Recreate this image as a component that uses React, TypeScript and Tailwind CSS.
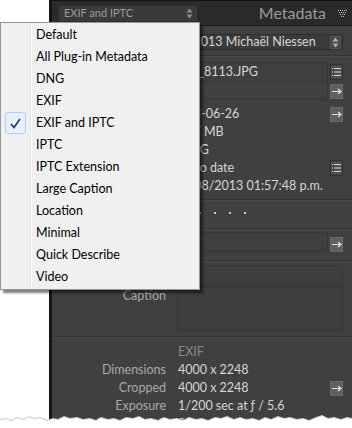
import React from 'react'

const presets = [
  'Default',
  'All Plug-in Metadata',
  'DNG',
  'EXIF',
  'EXIF and IPTC',
  'IPTC',
  'IPTC Extension',
  'Large Caption',
  'Location',
  'Minimal',
  'Quick Describe',
  'Video',
]

function Stepper({ color = '#a0a0a0' }: { color?: string }) {
  return (
    <svg width="7" height="11" viewBox="0 0 7 11">
      <path d="M3.5 0.5 L6.5 4.5 H0.5 Z M3.5 10.5 L6.5 6.5 H0.5 Z" fill={color} />
    </svg>
  )
}

function ListIcon() {
  return (
    <div className="w-[13px] h-[16px] bg-[#4c4c4c] border border-[#2e2e2e] flex items-center justify-center">
      <svg width="9" height="10" viewBox="0 0 9 10">
        <g fill="#d8d8d8">
          <rect x="0" y="1" width="1" height="1" />
          <rect x="2" y="1" width="7" height="1" />
          <rect x="0" y="4.5" width="1" height="1" />
          <rect x="2" y="4.5" width="7" height="1" />
          <rect x="0" y="8" width="1" height="1" />
          <rect x="2" y="8" width="7" height="1" />
        </g>
      </svg>
    </div>
  )
}

function ArrowIcon() {
  return (
    <div className="w-[13px] h-[15px] bg-[#5e5e5e] border border-[#6a6a6a] flex items-center justify-center">
      <svg width="10" height="7" viewBox="0 0 10 7">
        <path d="M0 3.5 H8.5 M6 1 L9 3.5 L6 6" stroke="#e4e4e4" strokeWidth="1.2" fill="none" />
      </svg>
    </div>
  )
}

function Sep({ className = '' }: { className?: string }) {
  return <div className={`h-[2px] bg-[#333333] border-b border-[#4a4a4a] ${className}`} />
}

type RowProps = {
  label?: string
  value?: React.ReactNode
  icon?: React.ReactNode
  gap?: string
}

// gap = left margin of the value column (default puts values at x=178)
function Row({ label, value, icon, gap = 'ml-[12px]' }: RowProps) {
  return (
    <div className="flex items-center h-[18px]">
      <div className="w-[114px] shrink-0 text-right text-[#a8a8a8]">{label}</div>
      <div className={`${gap} flex-1 min-w-0 whitespace-nowrap overflow-hidden text-[#d6d6d6]`}>{value}</div>
      <div className="w-[13px] ml-[2px] mr-[9px] shrink-0 flex justify-center">{icon}</div>
    </div>
  )
}

function BoxRow({ value, icon, gap = 'ml-[9px]' }: RowProps) {
  return (
    <div className="flex items-center h-[20px]">
      <div className="w-[114px] shrink-0" />
      <div className={`${gap} flex-1 h-full border border-[#373737] bg-[#3f3f3f] flex items-center whitespace-nowrap overflow-hidden text-[#d6d6d6]`}>
        {value}
      </div>
      <div className="w-[13px] ml-[2px] mr-[9px] shrink-0 flex justify-center">{icon}</div>
    </div>
  )
}

// ragged paper edge at the bottom of the screenshot
function TornEdge() {
  return (
    <svg className="absolute left-0 bottom-0" width="352" height="13" viewBox="0 0 352 13">
      <path
        d="M0 13 L0 4 L6 3 L11 5 L17 2 L23 4 L29 1 L34 3 L40 2 L47 5 L53 3 L58 4 L64 1 L70 3 L77 2 L83 4 L90 3 L96 5 L101 2 L108 4 L114 3 L120 5 L126 2 L133 3 L139 1 L145 4 L151 3 L158 5 L164 2 L170 4 L177 3 L183 5 L189 2 L196 4 L202 3 L208 5 L215 2 L221 3 L227 1 L234 4 L240 2 L246 4 L253 3 L259 5 L265 2 L271 4 L278 1 L284 3 L290 2 L297 4 L303 3 L309 5 L316 2 L322 0 L328 3 L334 2 L341 4 L347 2 L352 3 L352 13 Z"
        fill="#c8c8c8"
      />
      <path
        d="M0 13 L0 5 L6 4 L11 6 L17 3 L23 5 L29 2 L34 4 L40 3 L47 6 L53 4 L58 5 L64 2 L70 4 L77 3 L83 5 L90 4 L96 6 L101 3 L108 5 L114 4 L120 6 L126 3 L133 4 L139 2 L145 5 L151 4 L158 6 L164 3 L170 5 L177 4 L183 6 L189 3 L196 5 L202 4 L208 6 L215 3 L221 4 L227 2 L234 5 L240 3 L246 5 L253 4 L259 6 L265 3 L271 5 L278 2 L284 4 L290 3 L297 5 L303 4 L309 6 L316 3 L322 1 L328 4 L334 3 L341 5 L347 3 L352 4 L352 13 Z"
        fill="#ffffff"
      />
    </svg>
  )
}

function PresetMenu() {
  return (
    <div className="absolute left-0 top-[22px] w-[200px] bg-[#f0f0f0] border border-[#979797] py-px shadow-[3px_3px_2px_rgba(0,0,0,0.5)] font-['Lato',sans-serif] text-[12.5px] text-black">
      <div className="absolute left-[29px] top-0 bottom-0 w-px bg-[#e2e3e3]" />
      <div className="absolute left-[30px] top-0 bottom-0 w-px bg-white" />
      {presets.map((p) => (
        <div key={p} className="relative h-[22px] flex items-center pl-[35px]">
          {p === 'EXIF and IPTC' && (
            <div className="absolute left-[4px] top-0 w-[21px] h-[22px] rounded-[3px] border border-[#aecff7] bg-[#e8f1fb] flex items-center justify-center">
              <svg width="11" height="11" viewBox="0 0 11 11">
                <path d="M1 6 L4 9.5 L10 1" stroke="#14326b" strokeWidth="1.6" fill="none" />
              </svg>
            </div>
          )}
          {p}
        </div>
      ))}
    </div>
  )
}

export default function App() {
  return (
    <div className="relative w-[352px] h-[428px] bg-white overflow-hidden font-['Lato',sans-serif] text-[12.5px]">
      <div className="ml-[49px] h-[428px] border-l-[3px] border-[#141414] bg-[#404040] flex flex-col">
        {/* header */}
        <div className="h-[26px] shrink-0 bg-[#2a2a2a] border-t border-[#111111] border-b border-b-[#1c1c1c] flex items-center">
          <div className="ml-[6px] w-[140px] h-[17px] bg-[#3a3a3a] border border-[#2f2f2f] flex items-center pl-[5px] pr-[4px]">
            <span className="text-[11px] text-[#9c9c9c] flex-1">EXIF and IPTC</span>
            <Stepper color="#8c8c8c" />
          </div>
          <span className="ml-auto text-[16px] text-[#9a9a9a] leading-none">Metadata</span>
          <svg className="ml-[12px] mr-[5px]" width="9" height="7" viewBox="0 0 9 7">
            <g fill="#bdbdbd">
              <rect x="0" y="0" width="1" height="1" /><rect x="2" y="0" width="1" height="1" />
              <rect x="4" y="0" width="1" height="1" /><rect x="6" y="0" width="1" height="1" />
              <rect x="8" y="0" width="1" height="1" /><rect x="1" y="2" width="1" height="1" />
              <rect x="3" y="2" width="1" height="1" /><rect x="5" y="2" width="1" height="1" />
              <rect x="7" y="2" width="1" height="1" /><rect x="2" y="4" width="1" height="1" />
              <rect x="4" y="4" width="1" height="1" /><rect x="6" y="4" width="1" height="1" />
              <rect x="3" y="6" width="1" height="1" /><rect x="5" y="6" width="1" height="1" />
            </g>
          </svg>
        </div>

        {/* body */}
        <div className="flex-1 flex flex-col">
          <div className="mt-[8px] flex items-center h-[16px]">
            <div className="w-[114px] shrink-0" />
            <div className="ml-[11px] flex-1 mr-[9px] h-full bg-[#3b3b3b] border border-[#2f2f2f] flex items-center pl-[2px]">
              <span className="flex-1 text-[#d6d6d6] whitespace-nowrap">© 2013 Michaël Niessen</span>
              <div className="w-[11px] h-[13px] mr-px border border-[#555555] bg-[#474747] flex items-center justify-center">
                <Stepper color="#b0b0b0" />
              </div>
            </div>
          </div>
          <Sep className="mt-[5px]" />
          <div className="mt-[5px]">
            <BoxRow gap="ml-[7px]" value="IMG_8113.JPG" icon={<ListIcon />} />
          </div>
          <div className="flex items-center h-[18px]">
            <div className="w-[114px] shrink-0" />
            <div className="ml-[9px] flex-1 h-full border border-[#373737] border-t-0" />
            <div className="w-[13px] ml-[2px] mr-[9px] shrink-0 flex justify-center"><ArrowIcon /></div>
          </div>
          <div className="mt-[5px]">
            <Row gap="ml-[6px]" value="2013-06-26" icon={<ArrowIcon />} />
            <Row gap="ml-[10px]" value="4.47 MB" />
            <Row gap="ml-[14px]" value="JPEG" />
            <Row gap="ml-[10px]" value="Up to date" icon={<ListIcon />} />
            <Row gap="ml-[8px]" value="12/08/2013 01:57:48 p.m." />
          </div>
          <Sep className="mt-[4px]" />
          <div className="flex items-center h-[24px]">
            <div className="w-[114px] shrink-0" />
            <div className="ml-[18px] flex gap-[13px]">
              {[0, 1, 2, 3, 4].map((i) => (
                <div key={i} className="w-[2px] h-[2px] bg-[#c8c8c8]" />
              ))}
            </div>
          </div>
          <Sep className="mt-[3px]" />
          <div className="mt-[2px]">
            <BoxRow value="" icon={<div className="mt-[5px]"><ArrowIcon /></div>} />
          </div>
          <Sep className="mt-[8px]" />
          <div className="mt-[3px] flex h-[20px]">
            <div className="w-[114px] shrink-0" />
            <div className="ml-[11px] flex-1 mr-[9px] border border-[#363636] bg-[#3e3e3e]" />
          </div>
          <div className="mt-px flex h-[45px]">
            <div className="w-[114px] shrink-0 text-right text-[#a8a8a8] pt-[1px]">Caption</div>
            <div className="ml-[11px] flex-1 mr-[9px] border border-[#363636] bg-[#3e3e3e]" />
          </div>
          <Sep className="mt-[5px]" />
          <div className="mt-[5px]">
            <Row value={<span className="text-[#8a8a8a]">EXIF</span>} />
            <Row label="Dimensions" value="4000 x 2248" />
            <Row label="Cropped" value="4000 x 2248" icon={<ArrowIcon />} />
            <Row label="Exposure" value="1/200 sec at ƒ / 5.6" />
            <Row label="Focal Length" value="24 mm" />
          </div>
        </div>
      </div>

      <PresetMenu />
      <TornEdge />
    </div>
  )
}
